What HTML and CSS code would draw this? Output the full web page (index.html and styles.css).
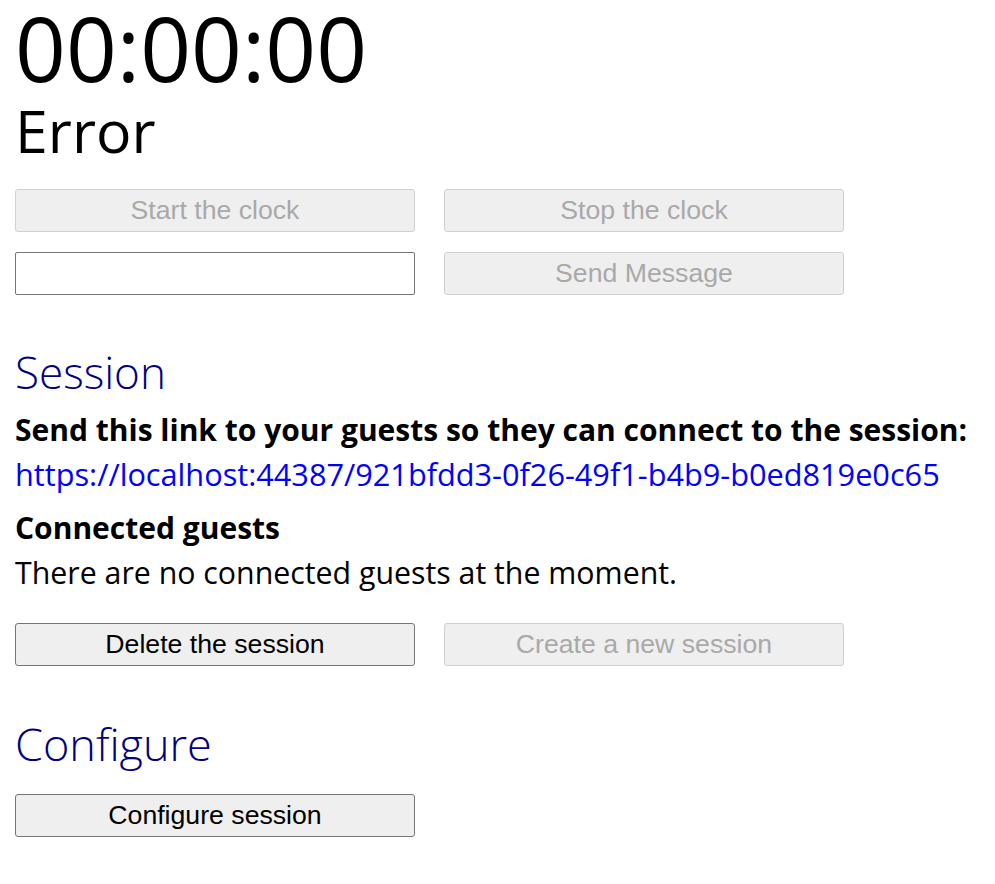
FILE: index.html
```html
<!DOCTYPE html>
<html>
<head>
<meta charset="utf-8">
<link rel="stylesheet" href="styles.css">
</head>
<body>
<div class="page">
  <div class="clock">00:00:00</div>
  <div class="status">Error</div>
  <div class="row first">
    <button class="btn" disabled>Start the clock</button>
    <button class="btn" disabled>Stop the clock</button>
  </div>
  <div class="row">
    <input class="msg" type="text">
    <button class="btn" disabled>Send Message</button>
  </div>
  <h2 class="section">Session</h2>
  <p class="bold">Send this link to your guests so they can connect to the session:</p>
  <a class="link" href="#">https://localhost:44387/921bfdd3-0f26-49f1-b4b9-b0ed819e0c65</a>
  <p class="bold guests">Connected guests</p>
  <p class="text">There are no connected guests at the moment.</p>
  <div class="row actions">
    <button class="btn">Delete the session</button>
    <button class="btn" disabled>Create a new session</button>
  </div>
  <h2 class="section configure">Configure</h2>
  <div class="row">
    <button class="btn">Configure session</button>
  </div>
</div>
</body>
</html>
```

FILE: styles.css
```css
html, body {
  margin: 0;
  padding: 0;
  background: #fff;
}
.page {
  padding: 0 15px;
  font-family: "Open Sans", "Noto Sans", sans-serif;
  color: #000;
}
.clock {
  font-size: 89px;
  line-height: 95px;
  margin: 0;
}
.status {
  font-size: 59px;
  line-height: 70px;
}
.row {
  display: flex;
  gap: 29px;
  margin-top: 20px;
}
.row.first {
  margin-top: 24px;
}
.btn {
  width: 400px;
  height: 43px;
  box-sizing: border-box;
  font-family: "Liberation Sans", Arial, sans-serif;
  font-size: 26.67px;
  color: #000;
  background: #efefef;
  border: 1px solid #767676;
  border-radius: 3px;
  padding: 0;
}
.btn:disabled {
  color: #a9a9a9;
  border-color: #d0d0d0;
  background: #efefef;
}
.msg {
  width: 400px;
  height: 43px;
  box-sizing: border-box;
  border: 1px solid #767676;
  border-radius: 2px;
  margin: 0;
  font-size: 24px;
}
.section {
  font-weight: 300;
  font-size: 44px;
  color: #000080;
  margin: 47px 0 0;
  line-height: 60px;
}
.section.configure {
  font-size: 45px;
  margin-top: 48px;
}
.bold {
  font-weight: 700;
  font-size: 30px;
  margin: 8px 0 0;
  line-height: 40px;
}
.link {
  display: block;
  font-size: 30.7px;
  color: #0000ff;
  text-decoration: none;
  line-height: 40px;
  margin-top: 4px;
}
.bold.guests {
  margin-top: 14px;
}
.text {
  font-size: 30.3px;
  margin: 5px 0 0;
  line-height: 40px;
}
.row.actions {
  margin-top: 30px;
}
```
